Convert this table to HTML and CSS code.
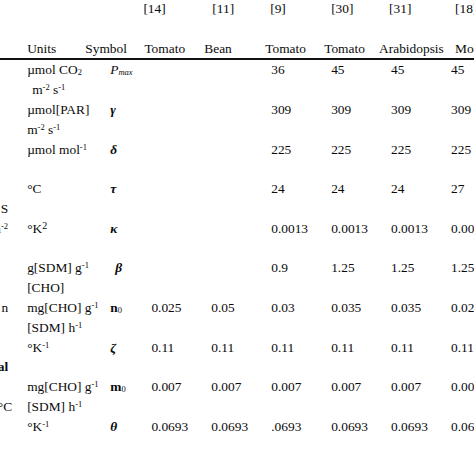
FILE: index.html
```html
<!DOCTYPE html>
<html>
<head>
<meta charset="utf-8">
<link rel="stylesheet" href="styles.css">
</head>
<body>
<div class="page">
<table class="tbl">
<colgroup>
<col class="c-left"><col class="c-units"><col class="c-sym">
<col class="c-val"><col class="c-val"><col class="c-val"><col class="c-val"><col class="c-val"><col class="c-val">
</colgroup>
<thead>
<tr class="refs"><td></td><td></td><td></td><td>[14]</td><td>[11]</td><td>[9]</td><td>[30]</td><td>[31]</td><td>[18]</td></tr>
<tr class="spacer"><td colspan="9">&nbsp;</td></tr>
<tr class="head"><td></td><td>Units</td><td>Symbol</td><td>Tomato</td><td>Bean</td><td>Tomato</td><td>Tomato</td><td>Arabidopsis</td><td>Model</td></tr>
</thead>
<tbody>
<tr><td></td><td>µmol CO<sub>2</sub><br><span class="ind">m<sup>-2</sup> s<sup>-1</sup></span></td><td><i>P<sub>max</sub></i></td><td></td><td></td><td>36</td><td>45</td><td>45</td><td>45</td></tr>
<tr><td></td><td>µmol[PAR]<br>m<sup>-2</sup> s<sup>-1</sup></td><td class="g">γ</td><td></td><td></td><td>309</td><td>309</td><td>309</td><td>309</td></tr>
<tr><td></td><td>µmol mol<sup>-1</sup><br>&nbsp;</td><td class="g">δ</td><td></td><td></td><td>225</td><td>225</td><td>225</td><td>225</td></tr>
<tr><td>&nbsp;<br>S</td><td>°C</td><td class="g">τ</td><td></td><td></td><td>24</td><td>24</td><td>24</td><td>27</td></tr>
<tr><td>m<sup>-2</sup><br>&nbsp;</td><td>°K<sup class="big">2</sup></td><td class="g">κ</td><td></td><td></td><td>0.0013</td><td>0.0013</td><td>0.0013</td><td>0.0013</td></tr>
<tr><td></td><td>g[SDM] g<sup>-1</sup><br>[CHO]</td><td class="g beta">β</td><td></td><td></td><td>0.9</td><td>1.25</td><td>1.25</td><td>1.25</td></tr>
<tr><td>n<br>&nbsp;</td><td>mg[CHO] g<sup>-1</sup><br>[SDM] h<sup>-1</sup></td><td><b>n</b><sub>0</sub></td><td>0.025</td><td>0.05</td><td>0.03</td><td>0.035</td><td>0.035</td><td>0.025</td></tr>
<tr><td>&nbsp;<br><b>al</b></td><td>°K<sup>-1</sup></td><td class="g">ζ</td><td>0.11</td><td>0.11</td><td>0.11</td><td>0.11</td><td>0.11</td><td>0.11</td></tr>
<tr><td>&nbsp;<br><span class="deg">25°C</span></td><td>mg[CHO] g<sup>-1</sup><br>[SDM] h<sup>-1</sup></td><td><b>m</b><sub>0</sub></td><td>0.007</td><td>0.007</td><td>0.007</td><td>0.007</td><td>0.007</td><td>0.006</td></tr>
<tr><td></td><td>°K<sup>-1</sup></td><td class="g">θ</td><td>0.0693</td><td>0.0693</td><td>.0693</td><td>0.0693</td><td>0.0693</td><td>0.0693</td></tr>
</tbody>
</table>
</div>
</body>
</html>
```
FILE: styles.css
```css
html, body {
  margin: 0;
  padding: 0;
  background: #fff;
}
.page {
  width: 474px;
  height: 474px;
  overflow: hidden;
}
.tbl {
  border-collapse: collapse;
  table-layout: fixed;
  width: 534px;
  margin-left: -33px;
  margin-top: -1px;
  font-family: "Liberation Serif", "Times New Roman", serif;
  font-size: 13.4px;
  color: #0a0a0a;
}
.c-left { width: 60px; }
.c-units { width: 58px; }
.c-sym { width: 56px; }
.c-val { width: 59.8px; }
.tbl td {
  padding: 0;
  line-height: 19.8px;
  vertical-align: top;
  white-space: nowrap;
  text-align: left;
}
sup, sub {
  font-size: 8.5px;
  line-height: 0;
}
sup { vertical-align: 4px; }
sup.big { font-size: 10px; vertical-align: 4px; }
sub { vertical-align: -1px; }
.ind { padding-left: 5px; }

.head td { border-bottom: 2px solid #111; }
.refs td:nth-child(4) { padding-left: 2px; }
.refs td:nth-child(5) { padding-left: 11px; }
.refs td:nth-child(6) { padding-left: 9px; }
.refs td:nth-child(7) { padding-left: 10px; }
.refs td:nth-child(8) { padding-left: 8px; }
.refs td:nth-child(9) { padding-left: 14px; }
.head td:nth-child(4) { padding-left: 3px; }
.head td:nth-child(5) { padding-left: 3px; }
.head td:nth-child(6) { padding-left: 4px; }
.head td:nth-child(7) { padding-left: 3px; }
.head td:nth-child(8) { text-indent: -2px; }
.head td:nth-child(9) { padding-left: 14px; }

tbody td:first-child {
  text-align: right;
  padding-right: 19px;
}
tbody .deg { margin-right: -4px; }
tbody td:nth-child(3) { padding-left: 25px; }
tbody td:nth-child(3).beta { padding-left: 30px; }
tbody td:nth-child(n+4) { padding-left: 10px; }
.g {
  font-weight: bold;
  font-style: italic;
}
```
